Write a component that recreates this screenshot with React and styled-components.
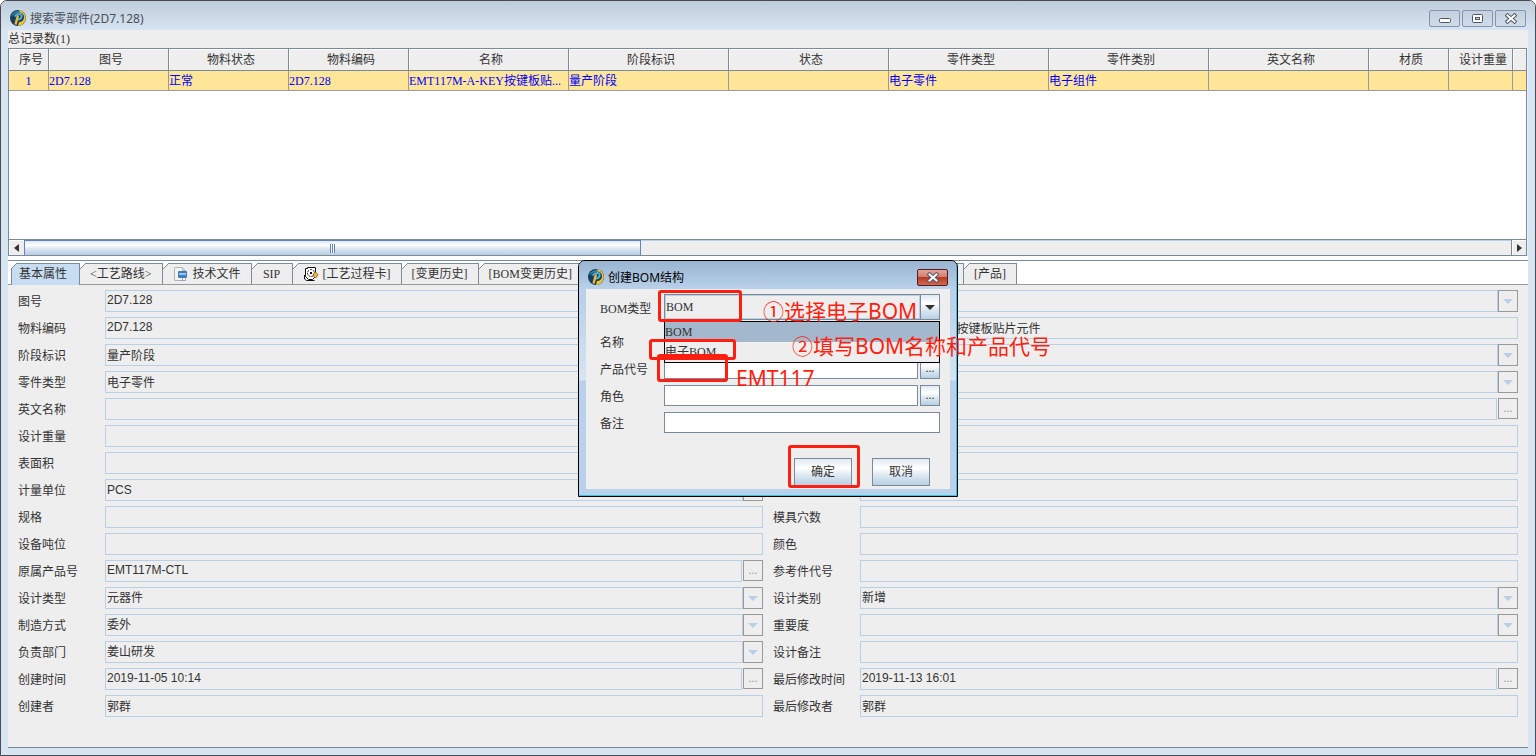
import styled, { createGlobalStyle, css } from "styled-components";

const columns = [
    { title: "序号", width: 40, value: "1" },
    { title: "图号", width: 120, value: "2D7.128" },
    { title: "物料状态", width: 120, value: "正常" },
    { title: "物料编码", width: 120, value: "2D7.128" },
    { title: "名称", width: 160, value: "EMT117M-A-KEY按键板贴..." },
    { title: "阶段标识", width: 160, value: "量产阶段" },
    { title: "状态", width: 160, value: "" },
    { title: "零件类型", width: 160, value: "电子零件" },
    { title: "零件类别", width: 160, value: "电子组件" },
    { title: "英文名称", width: 160, value: "" },
    { title: "材质", width: 80, value: "" },
    { title: "设计重量", width: 64, value: "" },
    { title: "", value: "" },
];

const leftFields = [
    { label: "图号", value: "2D7.128" },
    { label: "物料编码", value: "2D7.128" },
    { label: "阶段标识", value: "量产阶段" },
    { label: "零件类型", value: "电子零件" },
    { label: "英文名称" },
    { label: "设计重量" },
    { label: "表面积" },
    { label: "计量单位", value: "PCS", kind: "select" },
    { label: "规格" },
    { label: "设备吨位" },
    { label: "原属产品号", value: "EMT117M-CTL", kind: "more" },
    { label: "设计类型", value: "元器件", kind: "select" },
    { label: "制造方式", value: "委外", kind: "select" },
    { label: "负责部门", value: "姜山研发", kind: "select" },
    { label: "创建时间", value: "2019-11-05 10:14", kind: "more" },
    { label: "创建者", value: "郭群" },
];

const rightFields = [
    { kind: "select" },
    { value: "EMT117M-A-KEY按键板贴片元件" },
    { kind: "select" },
    { kind: "select" },
    { kind: "more" },
    {},
    {},
    {},
    { label: "模具穴数" },
    { label: "颜色" },
    { label: "参考件代号" },
    { label: "设计类别", value: "新增", kind: "select" },
    { label: "重要度", kind: "select" },
    { label: "设计备注" },
    { label: "最后修改时间", value: "2019-11-13 16:01", kind: "more" },
    { label: "最后修改者", value: "郭群" },
];

export default function App(){
    return(
        <>
        <GlobalStyle />
        <Window>
            <TitleBar>
                <Logo />
                <Title>搜索零部件(2D7.128)</Title>
                <WindowButtons>
                    <WindowButton aria-label="最小化"><MinimizeIcon /></WindowButton>
                    <WindowButton aria-label="最大化"><MaximizeIcon /></WindowButton>
                    <WindowButton aria-label="关闭"><CloseIcon /></WindowButton>
                </WindowButtons>
            </TitleBar>
            <Content>
                <Total>总记录数(1)</Total>
                <Results />
                <Tabs>
                    <Tab $active>基本属性</Tab>
                    <Tab>&lt;工艺路线&gt;</Tab>
                    <Tab><DocumentIcon />技术文件</Tab>
                    <Tab>SIP</Tab>
                    <Tab><CardIcon />[工艺过程卡]</Tab>
                    <Tab>[变更历史]</Tab>
                    <Tab>[BOM变更历史]</Tab>
                    <CoveredTabs />
                    <Tab>[产品]</Tab>
                </Tabs>
                <Panel>
                    <FieldColumn fields={leftFields} side="l" />
                    <FieldColumn fields={rightFields} side="r" />
                </Panel>
            </Content>
            <Overlay>
                <BomDialog />
            </Overlay>
        </Window>
        </>
    )
}

function Results(){
    return(
        <ScrollPane>
            <TableArea>
                <Table>
                    <colgroup>
                        {columns.map((c, i) => <col key={i} width={c.width} />)}
                    </colgroup>
                    <thead>
                        <tr>{columns.map((c, i) => <Th key={i}>{c.title}</Th>)}</tr>
                    </thead>
                    <tbody>
                        <tr>{columns.map((c, i) => <Td key={i} $center={i === 0}>{c.value}</Td>)}</tr>
                    </tbody>
                </Table>
            </TableArea>
            <ScrollBar>
                <ScrollButton aria-label="向左"><svg width="5" height="8"><path d="M5 0v8L0 4z" fill="#333" /></svg></ScrollButton>
                <Track>
                    <Thumb><Grip /></Thumb>
                </Track>
                <ScrollButton aria-label="向右" $right><svg width="5" height="8"><path d="M0 0v8l5-4z" fill="#333" /></svg></ScrollButton>
            </ScrollBar>
        </ScrollPane>
    )
}

function FieldColumn({ fields, side }){
    return(
        <Column>
            {fields.map((f, i) => {
                const id = side + i
                return(
                    <Field key={id}>
                        <Label htmlFor={id}>{f.label}</Label>
                        {f.kind === "select" ? (
                            <>
                            <Select id={id} disabled><option>{f.value}</option></Select>
                            <Arrow><ArrowIcon color="#b8cfe5" /></Arrow>
                            </>
                        ) : (
                            <Input id={id} readOnly defaultValue={f.value} />
                        )}
                        {f.kind === "more" && <More disabled>...</More>}
                    </Field>
                )
            })}
        </Column>
    )
}

function BomDialog(){
    return(
        <Dialog role="dialog" aria-labelledby="bom-title">
            <DialogTitle>
                <Logo />
                <DialogName id="bom-title">创建BOM结构</DialogName>
                <CloseButton aria-label="关闭"><CloseIcon /></CloseButton>
            </DialogTitle>
            <DialogBody>
                <ComboRow>
                    <DialogLabel htmlFor="bom-type">BOM类型</DialogLabel>
                    <Combo>
                        <ComboSelect id="bom-type"><option>BOM</option></ComboSelect>
                        <ComboArrow><ArrowIcon color="#333" /></ComboArrow>
                        <Popup role="listbox">
                            <Option role="option" aria-selected="true" $active>BOM</Option>
                            <Option role="option" aria-selected="false">电子BOM</Option>
                        </Popup>
                    </Combo>
                </ComboRow>
                <DialogRows>
                    <DialogRow>
                        <DialogLabel htmlFor="bom-name">名称</DialogLabel>
                        <DialogInput id="bom-name" />
                    </DialogRow>
                    <DialogRow>
                        <DialogLabel htmlFor="bom-code">产品代号</DialogLabel>
                        <DialogInput id="bom-code" />
                        <DialogMore>...</DialogMore>
                    </DialogRow>
                    <DialogRow>
                        <DialogLabel htmlFor="bom-role">角色</DialogLabel>
                        <DialogInput id="bom-role" />
                        <DialogMore>...</DialogMore>
                    </DialogRow>
                    <DialogRow>
                        <DialogLabel htmlFor="bom-note">备注</DialogLabel>
                        <DialogInput id="bom-note" />
                    </DialogRow>
                </DialogRows>
                <Actions>
                    <Action>确定</Action>
                    <Action>取消</Action>
                </Actions>
            </DialogBody>

            {/* red marks on top of the dialog */}
            <Mark $x={79} $y={29} $w={84} $h={32} />
            <Mark $x={70} $y={78} $w={87} $h={21} />
            <Mark $x={78} $y={93} $w={71} $h={28} />
            <Mark $x={209} $y={184} $w={72} $h={43} />
            <Note $x={184} $y={36}>①选择电子BOM</Note>
            <Note $x={213} $y={71}>②填写BOM名称和产品代号</Note>
            <Note $x={157} $y={103}>EMT117</Note>
        </Dialog>
    )
}

function Logo(){
    return(
        <svg width="16" height="16" viewBox="0 0 16 16">
            <circle cx="8" cy="8" r="8" fill="#173f5c" />
            <path d="M9 0.100a8 8 0 0 1-1 15.900l1-4c3 0 5-2 5-5s-2-4.500-5-4.500z" fill="#f0c530" />
            <path d="M1.500 5C3.500 1.500 7 0.500 10 1l-1 2C6 3 4 4 2.500 6z" fill="#2d84a8" />
            <path d="M4.500 6.500C6 4.500 8 4 9.500 4c2 0 2.500 1.500 2 3-0.500 1.600-2 2.500-4 2.500" stroke="#4fb0d6" strokeWidth="2" fill="none" />
            <path d="M8 5.500L5.500 14.500" stroke="#f3b63a" strokeWidth="2.400" fill="none" />
        </svg>
    )
}

function MinimizeIcon(){
    return(
        <svg width="12" height="11" viewBox="0 0 12 11">
            <rect x="0.5" y="5.5" width="11" height="4" rx="1" fill="#fff" stroke="#535666" />
        </svg>
    )
}

function MaximizeIcon(){
    return(
        <svg width="12" height="11" viewBox="0 0 12 11">
            <rect x="0.5" y="1.5" width="10" height="8" rx="1" fill="#fff" stroke="#535666" />
            <rect x="3.5" y="4.5" width="4" height="2" fill="#c5d3e2" stroke="#535666" />
        </svg>
    )
}

function CloseIcon(){
    return(
        <svg width="12" height="11" viewBox="0 0 12 11">
            <path d="M2.500 2.500l7 6M9.500 2.500l-7 6" stroke="#535666" strokeWidth="4" strokeLinecap="square" />
            <path d="M2.500 2.500l7 6M9.500 2.500l-7 6" stroke="#fff" strokeWidth="2" strokeLinecap="square" />
        </svg>
    )
}

function ArrowIcon({ color }){
    return(
        <svg width="10" height="5"><path d="M0 0h10L5 5z" fill={color} /></svg>
    )
}

function DocumentIcon(){
    return(
        <svg width="16" height="16" viewBox="0 0 16 16">
            <path d="M1.5 1.5h8l3 3v10h-11z" fill="#f4f4f4" stroke="#b5b5b5" />
            <path d="M9.5 1.5v3h3" fill="#ddd" stroke="#b5b5b5" />
            <rect x="5" y="5" width="9" height="7" rx="1" fill="#3f7fbc" />
            <rect x="6" y="7" width="7" height="2" fill="#9cc6ee" />
            <path d="M9.500 12v2M6 14.500h7" stroke="#9aa8b4" />
        </svg>
    )
}

function CardIcon(){
    return(
        <svg width="16" height="16" viewBox="0 0 16 16">
            <path d="M2.500 2.500h2v-1h8v9l-3 3h-4l-3-3z" fill="#fff" stroke="#111" />
            <circle cx="8" cy="7" r="3.500" fill="none" stroke="#111" strokeDasharray="2 1" />
            <rect x="7" y="6" width="2" height="2" fill="#111" />
            <path d="M1.500 9v4l2 1.500h8" fill="none" stroke="#111" />
            <path d="M10.500 7.500l2-1.500 2.500 3-2.500 3-2-2z" fill="#f5b942" stroke="#7a5316" strokeWidth="0.800" />
        </svg>
    )
}

const GlobalStyle = createGlobalStyle`
    * {
        box-sizing: border-box;
    }
    body {
        margin: 0;
        background: #fff;
        color: #333;
        font: 12px/16px "Liberation Serif", "Noto Sans CJK SC", serif;
    }
    button, input, select {
        margin: 0;
        padding: 0;
        border-radius: 0;
        font: inherit;
        color: inherit;
    }
    svg {
        display: block;
        flex: none;
    }
`

const metal = css`
    background: linear-gradient(#dfe9f3, #fff 35%, #dbe6f1 65%, #b8cfe5);
`

const Window = styled.div`
    position: relative;
    min-height: 100vh;
    display: flex;
    flex-direction: column;

    background: #d7e4f2;
    border: 1px solid #4a4a50;
    border-radius: 7px 7px 0 0;
`

const TitleBar = styled.div`
    height: 29px;
    padding: 9px 9px 0 9px;

    display: flex;
    align-items: flex-start;

    background: linear-gradient(#bfcddb, #d7e4f2);
    border-radius: 6px 6px 0 0;
`

const Title = styled.h1`
    flex: 1;
    margin: 0 0 0 4px;

    color: #4a4f57;
    font: 12px/17px "Noto Sans", "Noto Sans CJK SC", sans-serif;
`

const WindowButtons = styled.div`
    display: flex;
    gap: 2px;
`

const WindowButton = styled.button`
    width: 31px;
    height: 17px;

    display: flex;
    justify-content: center;
    align-items: center;

    background: linear-gradient(#c3d0de, #cfdcea);
    border: 1px solid #8592b0;
    border-radius: 2px;
`

const Content = styled.div`
    flex: 1;
    margin: 0 7px 7px;

    display: flex;
    flex-direction: column;

    background: #eee;
    border-bottom: 1px solid #7a8a99;
`

const Total = styled.div`
    height: 18px;
    line-height: 18px;
`

const ScrollPane = styled.div`
    margin-right: 1px;
    border: 1px solid #7a8a99;
    background: #fff;
`

const TableArea = styled.div`
    height: 190px;
    overflow: hidden;
`

const Table = styled.table`
    width: 100%;
    table-layout: fixed;
    border-collapse: separate;
    border-spacing: 0;
`

const Th = styled.th`
    height: 22px;
    padding: 0 0 0 5px;

    background: #eee;
    border-right: 1px solid #7a8a99;
    border-bottom: 1px solid #7a8a99;
    box-shadow: inset 1px 1px #fff;

    font-weight: 400;
    white-space: nowrap;

    &:last-child {
        border-right: none;
    }
`

const Td = styled.td`
    height: 20px;
    padding: 0;

    background: #ffe699;
    border-right: 1px solid #999;
    border-bottom: 1px solid #999;

    color: #00f;
    line-height: 18px;
    text-align: ${(p) => (p.$center ? "center" : "left")};
    white-space: nowrap;
    overflow: hidden;

    &:last-child {
        border-right: none;
    }
`

const ScrollBar = styled.div`
    height: 16px;
    display: flex;
    border-top: 1px solid #7a8a99;
`

const ScrollButton = styled.button`
    width: 15px;

    display: flex;
    justify-content: center;
    align-items: center;

    background: #eee;
    border: none;
    border-left: ${(p) => (p.$right ? "1px solid #7a8a99" : "none")};
    box-shadow: inset 1px 1px #fff;
`

const Track = styled.div`
    flex: 1;
    display: flex;
    background: #eee;
    box-shadow: inset 0 1px #b8cfe5;
`

const Thumb = styled.div`
    width: 41.5%;

    display: flex;
    justify-content: center;
    align-items: center;

    background: linear-gradient(#dde8f3, #fff 30%, #dbe6f1 55%, #b8cfe5);
    border: 1px solid #6382bf;
    border-bottom: none;
`

const Grip = styled.div`
    width: 5px;
    height: 9px;
    background: repeating-linear-gradient(90deg, #6382bf 0 1px, #fff 1px 2px);
`

const Tabs = styled.div`
    height: 29px;
    padding: 7px 0 0 3px;

    display: flex;

    background: linear-gradient(#7a8a99, #7a8a99) 0 4px / 100% 1px no-repeat #fff;
    border-bottom: 1px solid #999;
`

const Tab = styled.button`
    position: relative;
    min-width: 41px;
    height: 21px;
    padding: 0 10px 1px;

    display: flex;
    justify-content: center;
    align-items: center;
    gap: 4px;

    background: #eee;
    border: solid #7a8a99;
    border-width: 1px 1px 0 0;
    white-space: nowrap;

    &::before {
        content: "";
        position: absolute;
        top: -1px;
        left: 0;
        width: 6px;
        height: 6px;
        background: linear-gradient(to bottom right, #fff 42%, #7a8a99 42% 58%, #eee 58%);
    }

    ${(p) => p.$active && css`
        height: 22px;
        padding: 0 12px 2px 7px;
        background: #c8ddf2;
        border-left-width: 1px;

        &::before {
            left: -1px;
            background: linear-gradient(to bottom right, #fff 42%, #7a8a99 42% 58%, #c8ddf2 58%);
        }
    `}
`

const CoveredTabs = styled.div`
    width: 381px;
    background: #eee;
    border: solid #7a8a99;
    border-width: 1px 1px 0 0;
`

const Panel = styled.div`
    flex: 1;
    padding: 5px 10px 20px;

    display: grid;
    grid-template-columns: 1fr 1fr;
    gap: 10px;
    align-items: start;
`

const Column = styled.div`
    display: grid;
    gap: 5px;
`

const Field = styled.div`
    height: 22px;
    display: flex;
    align-items: flex-start;
`

const Label = styled.label`
    width: 87px;
    flex: none;
    line-height: 24px;
`

const fieldBox = css`
    flex: 1;
    min-width: 0;
    height: 22px;

    background: #eee;
    border: 1px solid #b8cfe5;
    outline: none;

    color: #333;
    font: 12px/20px "Liberation Sans", "Noto Sans CJK SC", sans-serif;
`

const Input = styled.input`
    ${fieldBox}
    padding: 0 1px 2px;
`

const Select = styled.select`
    ${fieldBox}
    padding: 0 1px;
    appearance: none;
    opacity: 1;
`

const Arrow = styled.span`
    width: 20px;
    height: 22px;

    display: flex;
    justify-content: center;
    align-items: center;

    border: 1px solid #999;
`

const More = styled.button`
    width: 20px;
    height: 21px;
    margin-left: 1px;

    background: #eee;
    border: 1px solid #999;

    color: #999;
    line-height: 19px;
`

const Overlay = styled.div`
    position: absolute;
    inset: 0;
    padding-top: 259px;

    display: flex;
    justify-content: center;
    align-items: flex-start;

    pointer-events: none;
`

const Dialog = styled.div`
    position: relative;
    width: 380px;
    padding: 0 7px 7px;

    background: linear-gradient(#b9d1ea 40px, #d7e4f2 119px, #b9d1ea 120px);
    border: 1px solid #000;
    border-radius: 7px 7px 0 0;
    box-shadow: inset -1px -1px #35c5e0;
    pointer-events: auto;
`

const DialogTitle = styled.div`
    height: 28px;
    margin: 0 -6px 0 -7px;
    padding: 8px 8px 0 9px;

    display: flex;
    align-items: flex-start;

    background: linear-gradient(#99b4d1, #b9d1ea);
    border-radius: 6px 6px 0 0;
`

const DialogName = styled.h2`
    flex: 1;
    margin: 0 0 0 4px;

    color: #000;
    font: 12px/17px "Noto Sans", "Noto Sans CJK SC", sans-serif;
`

const CloseButton = styled.button`
    width: 31px;
    height: 17px;

    display: flex;
    justify-content: center;
    align-items: center;

    background: linear-gradient(#e3a69a, #d27c6b 48%, #b63b26 50%, #cf6a52);
    border: 1px solid #5a1a22;
    border-radius: 2px;
`

const DialogBody = styled.div`
    height: 200px;
    padding: 5px 10px 0 14px;
    background: #eee;
`

const ComboRow = styled.div`
    display: flex;
    align-items: center;
    margin-bottom: 11px;
`

const DialogLabel = styled.label`
    width: 64px;
    flex: none;
    padding-top: 3px;
`

const Combo = styled.div`
    position: relative;
    flex: 1;
    display: flex;
    height: 26px;
`

const ComboSelect = styled.select`
    flex: 1;
    padding: 0 1px;

    appearance: none;
    background: #eee;
    border: 1px solid #7a8a99;
    border-right: none;
    box-shadow: inset 1px 1px #b8cfe5, inset -1px -1px #b8cfe5;
    outline: none;
`

const ComboArrow = styled.span`
    width: 20px;

    display: flex;
    justify-content: center;
    align-items: center;

    ${metal}
    border: 1px solid #7a8a99;
`

const Popup = styled.ul`
    position: absolute;
    top: 27px;
    left: 0;
    right: 0;
    margin: 0;
    padding: 0;

    background: #eee;
    border: 1px solid #000;
    list-style: none;
`

const Option = styled.li`
    height: 20px;
    line-height: 20px;
    background: ${(p) => (p.$active ? "#a3b8cc" : "#eee")};
`

const DialogRows = styled.div`
    display: grid;
    gap: 6px;
`

const DialogRow = styled.div`
    height: 21px;
    display: flex;
    align-items: center;
`

const DialogInput = styled.input`
    flex: 1;
    min-width: 0;
    height: 21px;
    padding: 0 1px;

    background: #fff;
    border: 1px solid #7a8a99;
    outline: none;
`

const DialogMore = styled.button`
    width: 20px;
    height: 21px;
    margin-left: 2px;

    ${metal}
    border: 1px solid #7a8a99;
    line-height: 19px;
`

const Actions = styled.div`
    margin-top: 25px;
    padding-right: 10px;

    display: flex;
    justify-content: flex-end;
    gap: 20px;
`

const Action = styled.button`
    width: 58px;
    height: 28px;

    ${metal}
    border: 1px solid #7a8a99;
`

const Mark = styled.div`
    position: absolute;
    left: ${(p) => p.$x}px;
    top: ${(p) => p.$y}px;
    width: ${(p) => p.$w}px;
    height: ${(p) => p.$h}px;

    border: 3px solid #ff1f10;
    border-radius: 3px;
    pointer-events: none;
`

const Note = styled.div`
    position: absolute;
    left: ${(p) => p.$x}px;
    top: ${(p) => p.$y}px;

    color: #ff1f10;
    font: 21px/28px "Noto Sans", "Noto Sans CJK SC", sans-serif;
    white-space: nowrap;
    pointer-events: none;
`
